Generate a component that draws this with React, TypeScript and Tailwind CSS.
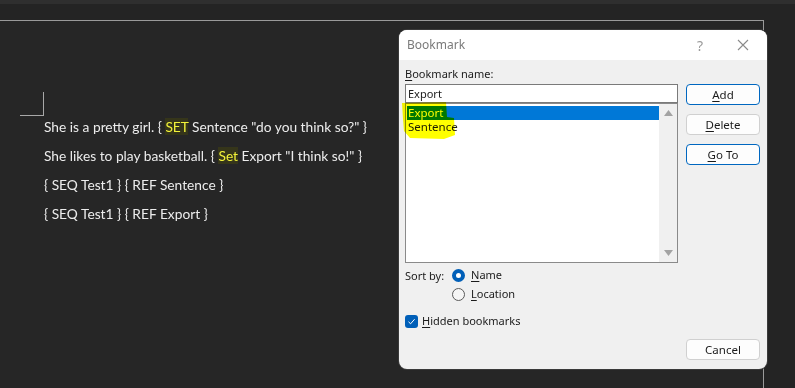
import type { ReactNode } from "react";

function U({ children }: { children: ReactNode }) {
  return <span className="underline underline-offset-2">{children}</span>;
}

function Btn({ children, primary }: { children: ReactNode; primary?: boolean }) {
  return (
    <button
      type="button"
      className={
        "flex h-[21px] w-[74px] items-center justify-center rounded-[4px] border bg-[#fdfdfd] text-[11.5px] text-[#1b1b1b] " +
        (primary ? "border-[#0067c0]" : "border-[#d0d0d0]")
      }
    >
      {children}
    </button>
  );
}

function DocLine({ children }: { children: ReactNode }) {
  return <p className="h-[29px] leading-[20px]">{children}</p>;
}

function Hl({ children }: { children: ReactNode }) {
  return <span className="bg-[#35351a] text-[#f2f23a]">{children}</span>;
}

export default function App() {
  return (
    <div className="relative h-[388px] w-[795px] overflow-hidden bg-[#242424] font-['Lato',sans-serif]">
      <div className="h-[4px] bg-[#2f2f2f]" />

      {/* document page */}
      <div className="mt-[16px] h-[400px] w-[764px] border-t border-r border-[#9a9a9a] bg-[#262626]">
        <div className="ml-[20px] mt-[71px] h-[24px] w-[24px] border-r border-b border-[#a8a8a8]" />
        <div className="ml-[44px] mt-[1px] text-[13.75px] text-[#ececec]">
          <DocLine>
            She is a pretty girl. {"{"} <Hl>SET</Hl> Sentence "do you think so?" {"}"}
          </DocLine>
          <DocLine>
            She likes to play basketball. {"{ "}<Hl>Set</Hl> Export "I think so!" {"}"}
          </DocLine>
          <DocLine>{"{ SEQ Test1 } { REF Sentence }"}</DocLine>
          <DocLine>{"{ SEQ Test1 } { REF Export }"}</DocLine>
        </div>
      </div>

      {/* dialog */}
      <div className="absolute left-[399px] top-[30px] flex h-[339px] w-[368px] flex-col overflow-hidden rounded-[8px] bg-[#f0f0f0] font-['Noto_Sans',sans-serif] text-[11px] text-[#1b1b1b] shadow-[0_0_0_1px_#3a3a3a]">
        <div className="flex h-[30px] items-center bg-white pl-[8px] pr-[16px]">
          <span className="text-[12px] text-[#7a7a7a]">Bookmark</span>
          <span className="ml-auto mr-[34px] text-[14px] text-[#9a9a9a]">?</span>
          <svg width="12" height="12" viewBox="0 0 12 12" className="mr-[2px]">
            <path d="M1 1 11 11M11 1 1 11" stroke="#8a8a8a" strokeWidth="1.1" />
          </svg>
        </div>

        <div className="flex flex-1 px-[6px] pt-[6px]">
          <div className="flex w-[273px] flex-col">
            <label className="leading-[16px]">
              <U>B</U>ookmark name:
            </label>
            <div className="mt-[2px] flex h-[19px] items-center border border-[#7a7a7a] bg-white px-[2px] leading-none">
              Export
            </div>
            <div className="relative mt-[0px] flex h-[160px] border border-[#8a8a8a] bg-white">
              <div className="flex flex-1 flex-col pt-[2px] pl-[1px] text-[11.5px] leading-[14px]">
                <div className="bg-[#0078d7] pl-[1px] text-white">Export</div>
                <div className="pl-[1px]">Sentence</div>
              </div>
              <div className="flex w-[18px] flex-col items-center justify-between bg-[#f0f0f0] py-[6px]">
                <svg width="9" height="6" viewBox="0 0 9 6">
                  <path d="M4.5 0 9 6H0z" fill="#a3a3a3" />
                </svg>
                <svg width="9" height="6" viewBox="0 0 9 6">
                  <path d="M0 0h9L4.5 6z" fill="#a3a3a3" />
                </svg>
              </div>
              {/* highlighter marks */}
              <svg
                width="60"
                height="40"
                viewBox="0 0 60 40"
                className="pointer-events-none absolute left-[-6px] top-[-2px] mix-blend-multiply"
              >
                <path
                  d="M2 1 L46 0 L47 15 L54 16 L55 33 L44 37 L10 36 L4 29 L3 17 Z"
                  fill="#ffff00"
                />
              </svg>
            </div>

            <div className="mt-[3px] flex">
              <span className="w-[47px] leading-[19px]">Sort by:</span>
              <div className="flex flex-col">
                <div className="flex h-[19px] items-center gap-[6px]">
                  <span className="h-[13px] w-[13px] rounded-full border-[4px] border-[#005fb8] bg-white" />
                  <span>
                    <U>N</U>ame
                  </span>
                </div>
                <div className="flex h-[19px] items-center gap-[6px]">
                  <span className="h-[13px] w-[13px] rounded-full border border-[#5a5a5a] bg-[#f5f5f5]" />
                  <span>
                    <U>L</U>ocation
                  </span>
                </div>
              </div>
            </div>

            <div className="mt-[9px] flex h-[16px] items-center gap-[4px]">
              <span className="flex h-[13px] w-[13px] items-center justify-center rounded-[3px] bg-[#005fb8]">
                <svg width="9" height="9" viewBox="0 0 9 9">
                  <path d="M1.5 4.8 3.6 6.8 7.6 2.2" fill="none" stroke="white" strokeWidth="1" />
                </svg>
              </span>
              <span>
                <U>H</U>idden bookmarks
              </span>
            </div>
          </div>

          <div className="ml-[8px] flex flex-1 flex-col pt-[18px] pb-[9px]">
            <div className="flex flex-col gap-[9px]">
              <Btn primary>
                <U>A</U>dd
              </Btn>
              <Btn>
                <U>D</U>elete
              </Btn>
              <Btn primary>
                <U>G</U>o To
              </Btn>
            </div>
            <div className="mt-auto">
              <Btn>Cancel</Btn>
            </div>
          </div>
        </div>
      </div>
    </div>
  );
}
